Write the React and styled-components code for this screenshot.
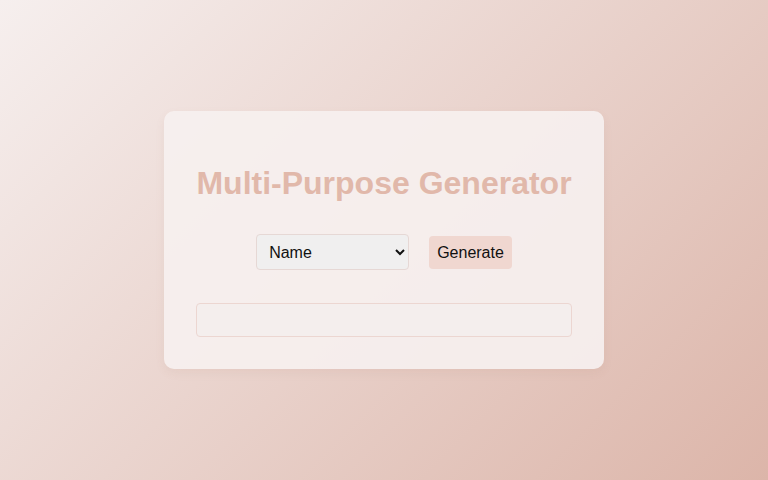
import React, { useState } from 'react';
import styled, { createGlobalStyle } from 'styled-components';

const GlobalStyle = createGlobalStyle`
  html, body {
    margin: 0;
    padding: 0;
    height: 100%;
  }

  body {
    font-family: "Liberation Sans", Arial, sans-serif;
    background: linear-gradient(135deg, #f6efee 0%, #dcb5a9 100%);
    min-height: 100vh;
  }

  #root {
    height: 100%;
  }
`;

const Page = styled.div`
  height: 480px;
  display: flex;
  justify-content: center;
  align-items: center;
`;

const Card = styled.div`
  width: 440px;
  box-sizing: border-box;
  padding: 32px;
  border-radius: 10px;
  background-color: rgba(246, 240, 239, 0.92);
  box-shadow: 0 4px 10px rgba(160, 110, 95, 0.08);
  text-align: center;
`;

const Title = styled.h1`
  font-size: 32px;
  font-weight: 700;
  color: #e1b8aa;
  margin: 22px 0 32px;
  line-height: 37px;
  white-space: nowrap;
`;

const Controls = styled.div`
  display: flex;
  justify-content: center;
  align-items: center;
  gap: 20px;
  margin-bottom: 33px;
`;

const Select = styled.select`
  width: 153px;
  height: 36px;
  padding: 0 8px;
  font-family: "Liberation Sans", Arial, sans-serif;
  font-size: 16px;
  color: #111;
  background-color: #f0efef;
  border: 1px solid #e6d8d5;
  border-radius: 4px;
  outline: none;
`;

const Button = styled.button`
  height: 33px;
  margin-top: 1px;
  padding: 0 8px;
  font-family: "Liberation Sans", Arial, sans-serif;
  font-size: 16px;
  color: #111;
  background-color: #f0d7d0;
  border: none;
  border-radius: 4px;
  cursor: pointer;
`;

const Output = styled.div`
  height: 34px;
  box-sizing: border-box;
  border: 1px solid #ecd6d1;
  border-radius: 4px;
  background-color: #f4eeed;
  font-size: 16px;
  line-height: 32px;
`;

function App() {
  const [kind, setKind] = useState('name');
  const [result] = useState('');

  return (
    <>
      <GlobalStyle />
      <Page>
        <Card>
          <Title>Multi-Purpose Generator</Title>
          <Controls>
            <Select value={kind} onChange={(e) => setKind(e.target.value)}>
              <option value="name">Name</option>
              <option value="color">Color</option>
              <option value="number">Number</option>
            </Select>
            <Button>Generate</Button>
          </Controls>
          <Output>{result}</Output>
        </Card>
      </Page>
    </>
  );
}

export default App;
